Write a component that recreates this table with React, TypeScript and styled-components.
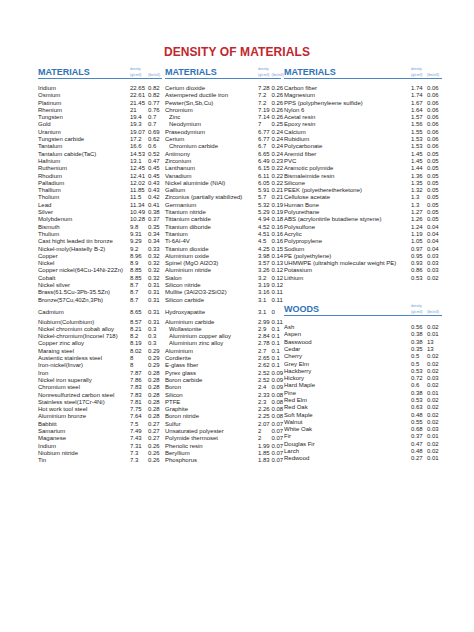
import React from 'react';
import styled, { createGlobalStyle } from 'styled-components';

type Item = { name: string; g: string; lb: string; indent: boolean; tall: boolean };

// "~" marks an indented name, "^" a taller row
const parse = (block: string): Item[] =>
  block
    .trim()
    .split('\n')
    .map((line) => {
      const [raw, g, lb] = line.split('|');
      return {
        name: raw.replace(/^[~^]/, ''),
        g,
        lb,
        indent: raw.startsWith('~'),
        tall: raw.startsWith('^'),
      };
    });

const leftData = parse(`
Iridium|22.65|0.82
Osmium|22.61|0.82
Platinum|21.45|0.77
Rhenium|21|0.76
Tungsten|19.4|0.7
Gold|19.3|0.7
Uranium|19.07|0.69
Tungsten carbide|17.2|0.62
Tantalum|16.6|0.6
Tantalum cabide(TaC)|14.53|0.52
Hafnium|13.1|0.47
Ruthenium|12.45|0.45
Rhodium|12.41|0.45
Palladium|12.02|0.43
Thallium|11.85|0.43
Tholium|11.5|0.42
Lead|11.34|0.41
Silver|10.49|0.38
Molybdenum|10.28|0.37
Bismuth|9.8|0.35
Thulium|9.31|0.34
Cast hight leaded tin bronze|9.29|0.34
Nickel-moly(Hastelly B-2)|9.2|0.33
Copper|8.96|0.32
Nickel|8.9|0.32
Copper nickel(64Cu-14Ni-22Zn)|8.85|0.32
Cobalt|8.85|0.32
Nickel silver|8.7|0.31
Brass(61.5Cu-3Pb-35.5Zn)|8.7|0.31
Bronze(57Cu,40Zn,3Pb)|8.7|0.31
^Cadmium|8.65|0.31
Niobium(Columbium)|8.57|0.31
Nickel chromium cobalt alloy|8.21|0.3
Nickel-chromium(Inconel 718)|8.2|0.3
Copper zinc alloy|8.19|0.3
Maraing steel|8.02|0.29
Austentic stainless steel|8|0.29
Iron-nickel(Invar)|8|0.29
Iron|7.87|0.28
Nickel iron superally|7.86|0.28
Chromium steel|7.83|0.28
Nonresulfurized carbon steel|7.83|0.28
Stainless steel(17Cr-4Ni)|7.81|0.28
Hot work tool steel|7.75|0.28
Aluminium bronze|7.64|0.28
Babbitt|7.5|0.27
Samarium|7.49|0.27
Maganese|7.43|0.27
Indium|7.31|0.26
Niobium nitride|7.3|0.26
Tin|7.3|0.26
`);

const middleData = parse(`
Cerium dioxide|7.28|0.26
Astempered ductile iron|7.2|0.26
Pewter(Sn,Sb,Cu)|7.2|0.26
Chromium|7.19|0.26
~Zinc|7.14|0.26
~Neodymium|7|0.25
Praseodymium|6.77|0.24
Cerium|6.77|0.24
~Chromium carbide|6.7|0.24
Antimony|6.65|0.24
Zirconium|6.49|0.23
Lanthanum|6.15|0.22
Vanadium|6.11|0.22
Nickel aluminide (NiAl)|6.05|0.22
Gallium|5.91|0.21
Zirconius (partially stabilized)|5.7|0.21
Germanium|5.32|0.19
Titanium nitride|5.29|0.19
Tittanium carbide|4.94|0.18
Titanium diboride|4.52|0.16
Titanium|4.51|0.16
Ti-6Al-4V|4.5|0.16
Titanium dioxide|4.25|0.15
Aluminium oxide|3.98|0.14
Spinel (MgO Al2O3)|3.57|0.13
Aluminium nitride|3.26|0.12
Sialon|3.2|0.12
Silicon nitride|3.19|0.12
Mullite (3Al2O3-2SiO2)|3.16|0.11
Silicon carbide|3.1|0.11
^Hydroxyapatite|3.1|0
Aluminium carbide|2.99|0.11
~Wollastonite|2.9|0.1
~Aluminium copper alloy|2.84|0.1
~Aluminium zinc alloy|2.78|0.1
Aluminium|2.7|0.1
Cordierite|2.65|0.1
E-glass fiber|2.62|0.1
Pyrex glass|2.52|0.09
Boron carbide|2.52|0.09
Boron|2.4|0.09
Silicon|2.33|0.08
PTFE|2.3|0.08
Graphite|2.26|0.08
Boron nitride|2.25|0.08
Sulfur|2.07|0.07
Unsaturated polyester|2|0.07
Polymide thermoset|2|0.07
Phenolic resin|1.99|0.07
Beryllium|1.85|0.07
Phosphorus|1.83|0.07
`);

const rightData = parse(`
Carbon fiber|1.74|0.06
Magnesium|1.74|0.06
PPS (polyphenyleene sulfide)|1.67|0.06
Nylon 6|1.64|0.06
Acetal resin|1.57|0.06
Epoxy resin|1.56|0.06
Calcium|1.55|0.06
Rubidium|1.53|0.06
Polycarbonate|1.53|0.06
Aremid fiber|1.45|0.05
PVC|1.45|0.05
Aramotic polymide|1.44|0.05
Bismaleimide resin|1.36|0.05
Silicone|1.35|0.05
PEEK (polyetheretherketone)|1.32|0.05
Cellulose acetate|1.3|0.05
Human Bone|1.3|0.05
Polyurethane|1.27|0.05
ABS (acrylonitrile butadiene styrene)|1.26|0.05
Polysulfone|1.24|0.04
Acrylic|1.19|0.04
Polypropylene|1.05|0.04
Sodium|0.97|0.04
PE (polyethylene)|0.95|0.03
UHMWPE (ultrahigh molecular weight PE)|0.93|0.03
Potassium|0.86|0.03
Lithium|0.53|0.02
`);

const woodsData = parse(`
Ash|0.56|0.02
Aspen|0.38|0.01
Basswood|0.38|13
Cedar|0.35|13
Cherry|0.5|0.02
Grey Elm|0.5|0.02
Hackberry|0.53|0.02
Hickory|0.72|0.03
Hard Maple|0.6|0.02
Pine|0.38|0.01
Red Elm|0.53|0.02
Red Oak|0.63|0.02
Soft Maple|0.48|0.02
Walnut|0.55|0.02
White Oak|0.68|0.03
Fir|0.37|0.01
Douglas Fir|0.47|0.02
Larch|0.48|0.02
Redwood|0.27|0.01
`);

const LEFT_COLS = '92px 18px 1fr';
const MID_COLS = '93px 13.5px 1fr';
const RIGHT_COLS = '127px 16px 1fr';

const GlobalStyle = createGlobalStyle`
  html, body {
    margin: 0;
    padding: 0;
    background: #ffffff;
  }
  body {
    font-family: "Liberation Sans", Arial, sans-serif;
    color: #262626;
  }
`;

const Page = styled.div`
  width: 474px;
  min-height: 632px;
  padding: 45px 0 0 38px;
  box-sizing: border-box;
`;

const Title = styled.h1`
  margin: 0 38px 8px 0;
  font-size: 12px;
  line-height: 14px;
  font-weight: 700;
  text-align: center;
  color: #c1272d;
  letter-spacing: 0.1px;
`;

const Columns = styled.div`
  display: grid;
  grid-template-columns: 127px 119px 161px;
`;

const Column = styled.section`
  display: flex;
  flex-direction: column;
`;

const SectionHead = styled.div<{ $cols: string; $mt?: number; $mb: number }>`
  display: grid;
  grid-template-columns: ${(p) => p.$cols};
  align-items: end;
  margin: ${(p) => p.$mt ?? 0}px 3px ${(p) => p.$mb}px 0;
  padding-bottom: 1px;
  border-bottom: 1.5px solid #4a86c5;
`;

const HeadName = styled.h2`
  margin: 0;
  font-size: 9px;
  line-height: 10px;
  font-weight: 700;
  color: #2e72b8;
`;

const UnitCell = styled.div`
  display: flex;
  flex-direction: column;
  gap: 2px;
`;

const UnitLabel = styled.span`
  font-size: 3.4px;
  line-height: 4px;
  color: #6f9bd0;
  white-space: nowrap;
`;

const Row = styled.div<{ $cols: string; $tall: boolean }>`
  display: grid;
  grid-template-columns: ${(p) => p.$cols};
  height: 7.3px;
  line-height: 7.3px;
  font-size: 6px;
  white-space: nowrap;
  margin: ${(p) => (p.$tall ? '4.7px 0 2.7px' : '0')};
`;

const Name = styled.span<{ $indent: boolean }>`
  padding-left: ${(p) => (p.$indent ? '4px' : '0')};
`;

const Value = styled.span``;

const Head = ({ title, cols, mt, mb }: { title: string; cols: string; mt?: number; mb: number }) => (
  <SectionHead $cols={cols} $mt={mt} $mb={mb}>
    <HeadName>{title}</HeadName>
    <UnitCell>
      <UnitLabel>density</UnitLabel>
      <UnitLabel>(g/cm3)</UnitLabel>
    </UnitCell>
    <UnitCell>
      <UnitLabel>(lbs/in3)</UnitLabel>
    </UnitCell>
  </SectionHead>
);

const Rows = ({ items, cols }: { items: Item[]; cols: string }) => (
  <>
    {items.map((it, i) => (
      <Row key={i} $cols={cols} $tall={it.tall}>
        <Name $indent={it.indent}>{it.name}</Name>
        <Value>{it.g}</Value>
        <Value>{it.lb}</Value>
      </Row>
    ))}
  </>
);

export default function App() {
  return (
    <Page>
      <GlobalStyle />
      <Title>DENSITY OF MATERIALS</Title>
      <Columns>
        <Column>
          <Head title="MATERIALS" cols={LEFT_COLS} mb={6} />
          <Rows items={leftData} cols={LEFT_COLS} />
        </Column>
        <Column>
          <Head title="MATERIALS" cols={MID_COLS} mb={6} />
          <Rows items={middleData} cols={MID_COLS} />
        </Column>
        <Column>
          <Head title="MATERIALS" cols={RIGHT_COLS} mb={6} />
          <Rows items={rightData} cols={RIGHT_COLS} />
          <Head title="WOODS" cols={RIGHT_COLS} mt={22} mb={8} />
          <Rows items={woodsData} cols={RIGHT_COLS} />
        </Column>
      </Columns>
    </Page>
  );
}
